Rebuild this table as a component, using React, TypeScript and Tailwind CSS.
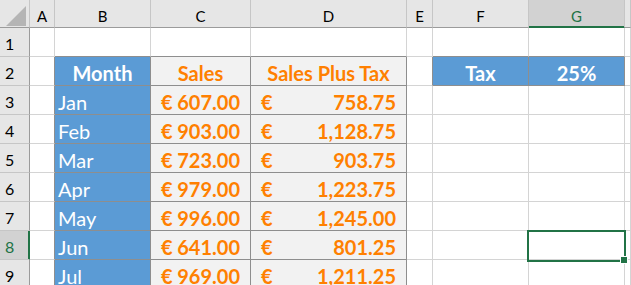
import React from 'react'

const COLS = ['A', 'B', 'C', 'D', 'E', 'F', 'G', 'H']
const ROWS = [1, 2, 3, 4, 5, 6, 7, 8, 9]

const sales: Record<number, { month: string; amount: number }> = {
  3: { month: 'Jan', amount: 607 },
  4: { month: 'Feb', amount: 903 },
  5: { month: 'Mar', amount: 723 },
  6: { month: 'Apr', amount: 979 },
  7: { month: 'May', amount: 996 },
  8: { month: 'Jun', amount: 641 },
  9: { month: 'Jul', amount: 969 },
}

const TAX = 0.25

const fmt = (n: number) =>
  n.toLocaleString('en-US', { minimumFractionDigits: 2, maximumFractionDigits: 2 })

// bordered ranges: B2:D9 and F2:G2
const inRange = (r: number, c: number) =>
  (r >= 2 && c >= 1 && c <= 3) || (r === 2 && (c === 5 || c === 6))

const Money: React.FC<{ value: number }> = ({ value }) => (
  <div className="flex w-full justify-between px-[10px] font-bold text-[#ff8000]">
    <span>€</span>
    <span>{fmt(value)}</span>
  </div>
)

const Cell: React.FC<{ r: number; c: number }> = ({ r, c }) => {
  const rightDark = inRange(r, c) || inRange(r, c + 1)
  const bottomDark = inRange(r, c) || inRange(r + 1, c)
  const blue = (c === 1 && r >= 2) || (r === 2 && (c === 5 || c === 6))
  const gray = (c === 2 || c === 3) && r >= 2

  let content: React.ReactNode = null
  let align = 'justify-start'
  if (r === 2) {
    align = 'justify-center'
    if (c === 1) content = <span className="font-bold text-white">Month</span>
    if (c === 2) content = <span className="font-bold text-[#ff8000]">Sales</span>
    if (c === 3) content = <span className="font-bold text-[#ff8000]">Sales Plus Tax</span>
    if (c === 5) content = <span className="font-bold text-white">Tax</span>
    if (c === 6) content = <span className="font-bold text-white">25%</span>
  } else if (sales[r]) {
    const row = sales[r]
    if (c === 1) content = <span className="pl-[3px] text-white">{row.month}</span>
    if (c === 2) content = <Money value={row.amount} />
    if (c === 3) content = <Money value={row.amount * (1 + TAX)} />
  }

  const selected = r === 8 && c === 6

  return (
    <div
      className={`relative flex h-[29px] items-end whitespace-nowrap border-r border-b text-[20px] leading-[24px] ${align} ${
        rightDark ? 'border-r-[#8e8e8e]' : 'border-r-[#d4d4d4]'
      } ${bottomDark ? 'border-b-[#8e8e8e]' : 'border-b-[#d4d4d4]'} ${
        blue ? 'bg-[#5b9bd5]' : gray ? 'bg-[#f2f2f2]' : 'bg-white'
      }`}
    >
      {content}
      {selected && (
        <div className="absolute -left-[2px] -top-[1px] z-10 h-[32px] w-[99px] border-2 border-[#217346]">
          <div className="absolute left-[91px] top-[24px] h-[8px] w-[8px] border border-white bg-[#217346]" />
        </div>
      )}
    </div>
  )
}

export default function App() {
  return (
    <div className="h-[285px] w-[631px] overflow-hidden bg-white font-['Lato',sans-serif] text-black">
      <div className="grid grid-cols-[30px_25px_96px_100px_156px_26px_96px_96px_1fr]">
        {/* corner */}
        <div className="relative h-[28px] border-r border-b border-r-[#c6c6c6] border-b-[#9b9b9b] bg-[#e6e6e6]">
          <svg className="absolute left-[6px] top-[6px]" width="20" height="20" viewBox="0 0 20 20">
            <polygon points="20,0 20,20 0,20" fill="#b5b5b5" />
          </svg>
        </div>
        {COLS.map((col, i) => (
          <div
            key={col}
            className={`flex h-[28px] items-end justify-center overflow-hidden border-r border-b border-r-[#c6c6c6] pb-[1px] text-[15px] leading-[20px] ${
              i === 6
                ? 'border-b-[#217346] bg-[#d2d2d2] text-[#217346] shadow-[inset_0_-1px_0_#217346]'
                : 'border-b-[#9b9b9b] bg-[#e6e6e6]'
            }`}
          >
            {i < 7 ? col : null}
          </div>
        ))}

        {ROWS.map((r) => (
          <React.Fragment key={r}>
            <div
              className={`flex h-[29px] items-end border-r border-b border-b-[#c6c6c6] pb-[1px] pl-[5px] text-[16px] leading-[22px] ${
                r === 8
                  ? 'border-r-[#217346] bg-[#d2d2d2] text-[#217346] shadow-[inset_-1px_0_0_#217346]'
                  : 'border-r-[#9b9b9b] bg-[#e6e6e6]'
              }`}
            >
              {r}
            </div>
            {COLS.map((_, c) => (
              <Cell key={c} r={r} c={c} />
            ))}
          </React.Fragment>
        ))}
      </div>
    </div>
  )
}
